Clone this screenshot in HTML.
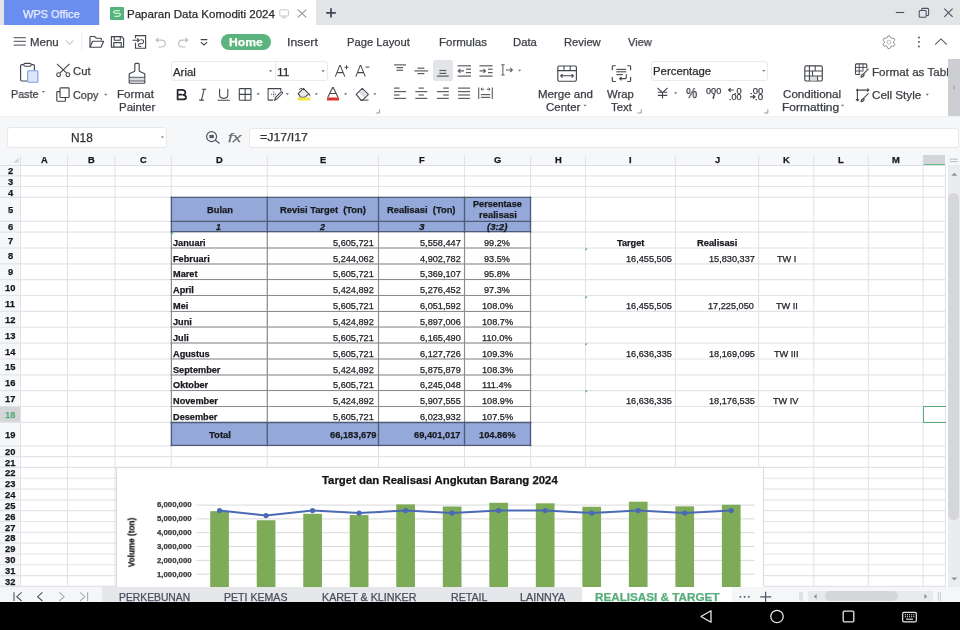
<!DOCTYPE html><html><head><meta charset="utf-8"><style>
*{margin:0;padding:0;box-sizing:border-box}
html,body{width:960px;height:630px;overflow:hidden;background:#fff;font-family:"Liberation Sans",sans-serif;color:#333}
.ab{position:absolute}
.t{position:absolute;white-space:pre;line-height:1;transform-origin:0 0;will-change:transform;-webkit-text-stroke:0.25px currentColor}
svg.ov{position:absolute;left:0;top:0;overflow:visible}
</style></head><body>

<div class="ab" style="left:0px;top:0px;width:960px;height:25px;background:#e3e4e6"></div>
<div class="ab" style="left:4px;top:0px;width:95px;height:25px;background:#6a8df0"></div>
<div class="ab" style="left:100px;top:0px;width:216px;height:25px;background:#ffffff"></div>
<div class="ab" style="left:110.2px;top:7.1px;width:13.6px;height:13.2px;background:#55b47b;border-radius:1px"></div>
<div class="t" style="left:23.1px;top:9px;font-size:11.26px;color:#eef2fe;transform:scaleX(0.978)">WPS Office</div>
<div class="t" style="left:126.83px;top:9px;font-size:11.26px;color:#2a2c31;transform:scaleX(1.024)">Paparan Data Komoditi 2024</div>
<svg class="ov" width="960" height="630" viewBox="0 0 960 630">
<path d="M119.9 10.7H115.6Q114 10.7 113.6 11.9Q113.4 13.3 115.2 13.3H118.6Q120.4 13.3 120.3 14.8Q120.1 16.3 118.4 16.3H114.2" fill="none" stroke="#e8fff0" stroke-width="1.05"/>
<rect x="279.8" y="9.8" width="8.6" height="6.2" rx="1" fill="none" stroke="#c3c6cc" stroke-width="1"/>
<path d="M284.1 16v1.6M282 17.8h4.2" stroke="#c3c6cc" stroke-width="1"/>
<path d="M297.8 9.6L306.3 17.3M306.3 9.6L297.8 17.3" stroke="#8d919a" stroke-width="1.05"/>
<path d="M331 8.3v9.2M326.2 12.9h9.6" stroke="#3c4456" stroke-width="1.7"/>
<path d="M895.8 12.5h8.4" stroke="#4b5060" stroke-width="1.1"/>
<rect x="919.2" y="10.5" width="7" height="6.8" rx="1" fill="none" stroke="#4b5060" stroke-width="1.05"/>
<path d="M921.7 10.4V9.4Q921.7 8.4 922.7 8.4H927.6Q928.6 8.4 928.6 9.4V14.4Q928.6 15.4 927.6 15.4H926.3" fill="none" stroke="#4b5060" stroke-width="1.05"/>
<path d="M944.3 8.6L952.6 16.9M952.6 8.6L944.3 16.9" stroke="#4b5060" stroke-width="1.05"/>
</svg>
<div class="t" style="left:30.38px;top:37px;font-size:10.9px;color:#3b3e45;transform:scaleX(1.052)">Menu</div>
<div class="ab" style="left:220.8px;top:33.5px;width:50.4px;height:16.7px;background:#5bb37d;border-radius:9px"></div>
<div class="t" style="left:228.91px;top:37px;font-size:11.19px;color:#ffffff;transform:scaleX(1.084);font-weight:bold">Home</div>
<div class="t" style="left:287.19px;top:37px;font-size:11.19px;color:#3b3e45;transform:scaleX(1.101)">Insert</div>
<div class="t" style="left:346.6px;top:37px;font-size:11.19px;color:#3b3e45">Page Layout</div>
<div class="t" style="left:439.08px;top:37px;font-size:11.19px;color:#3b3e45;transform:scaleX(1.029)">Formulas</div>
<div class="t" style="left:513.3px;top:37px;font-size:11.19px;color:#3b3e45;transform:scaleX(1.010)">Data</div>
<div class="t" style="left:563.81px;top:37px;font-size:11.19px;color:#3b3e45">Review</div>
<div class="t" style="left:628.3px;top:37px;font-size:11.19px;color:#3b3e45;transform:scaleX(0.985)">View</div>
<svg class="ov" width="960" height="630" viewBox="0 0 960 630">
<path d="M13.7 37.7h12.1M13.7 41.4h12.1M13.7 45.1h12.1" stroke="#6a6d73" stroke-width="1.2"/>
<path d="M66 40.4l3.6 4 3.6-4" fill="none" stroke="#acafb4" stroke-width="1"/>
<path d="M81.7 32v19.3" stroke="#ececee" stroke-width="1"/>
<path d="M90 47.2V37.2Q90 36.5 90.7 36.5H94.6L96.2 38.2H100.6Q101.3 38.2 101.3 38.9V40.6" fill="none" stroke="#42464e" stroke-width="1.15"/>
<path d="M90 47.2L92.6 41.2H103.6L101 47.2Z" fill="none" stroke="#42464e" stroke-width="1.15" stroke-linejoin="round"/>
<path d="M111.4 36.6H121.6L123.6 38.6V47.1H111.4Z" fill="none" stroke="#42464e" stroke-width="1.15"/>
<path d="M114.3 36.6V40.2H120.3V36.6M113.8 47.1V42.6H121.2V47.1" fill="none" stroke="#42464e" stroke-width="1.1"/>
<path d="M135.5 38.2V35.6H145.6V48.2H135.5V42.8" fill="none" stroke="#42464e" stroke-width="1.15"/>
<path d="M132.5 40.3H139M137.2 38.4L139.2 40.3L137.2 42.2" fill="none" stroke="#42464e" stroke-width="1.1"/>
<path d="M140.3 39.8Q143.8 39.2 143.6 41.7Q143.3 44 140.6 43.6Q138 43.6 138.4 45.6Q139 47 141.3 46.4" fill="none" stroke="#42464e" stroke-width="1.05"/>
<path d="M156.3 40.1H161.4Q165.3 40.1 165.3 43.6Q165.3 47 161.4 47H158.2M158.4 37.8L156.1 40.1L158.4 42.4" fill="none" stroke="#bbbec3" stroke-width="1.1"/>
<path d="M187.6 40.1H182.5Q178.6 40.1 178.6 43.6Q178.6 47 182.5 47H185.7M185.5 37.8L187.8 40.1L185.5 42.4" fill="none" stroke="#bbbec3" stroke-width="1.1"/>
<path d="M200.6 39.6H207.3M200.8 42.2L204 45L207.2 42.2" fill="none" stroke="#42464e" stroke-width="1.1"/>
<path d="M888.90 35.90L889.23 35.91L889.56 35.93L889.89 35.98L890.14 36.36L890.34 36.84L890.49 37.32L890.62 37.72L890.85 37.81L891.08 37.92L891.30 38.04L891.51 38.17L891.72 38.32L891.92 38.47L892.33 38.39L892.82 38.28L893.33 38.21L893.80 38.24L894.00 38.50L894.18 38.77L894.36 39.05L894.51 39.34L894.66 39.64L894.78 39.94L894.58 40.36L894.26 40.76L893.92 41.13L893.64 41.45L893.67 41.70L893.69 41.95L893.70 42.20L893.69 42.45L893.67 42.70L893.64 42.95L893.92 43.27L894.26 43.64L894.58 44.04L894.78 44.46L894.66 44.76L894.51 45.06L894.36 45.35L894.18 45.63L894.00 45.90L893.80 46.16L893.33 46.19L892.82 46.12L892.33 46.01L891.92 45.93L891.72 46.08L891.51 46.23L891.30 46.36L891.08 46.48L890.85 46.59L890.62 46.68L890.49 47.08L890.34 47.56L890.14 48.04L889.89 48.42L889.56 48.47L889.23 48.49L888.90 48.50L888.57 48.49L888.24 48.47L887.91 48.42L887.66 48.04L887.46 47.56L887.31 47.08L887.18 46.68L886.95 46.59L886.72 46.48L886.50 46.36L886.29 46.23L886.08 46.08L885.88 45.93L885.47 46.01L884.98 46.12L884.47 46.19L884.00 46.16L883.80 45.90L883.62 45.63L883.44 45.35L883.29 45.06L883.14 44.76L883.02 44.46L883.22 44.04L883.54 43.64L883.88 43.27L884.16 42.95L884.13 42.70L884.11 42.45L884.10 42.20L884.11 41.95L884.13 41.70L884.16 41.45L883.88 41.13L883.54 40.76L883.22 40.36L883.02 39.94L883.14 39.64L883.29 39.34L883.44 39.05L883.62 38.77L883.80 38.50L884.00 38.24L884.47 38.21L884.98 38.28L885.47 38.39L885.88 38.47L886.08 38.32L886.29 38.17L886.50 38.04L886.72 37.92L886.95 37.81L887.18 37.72L887.31 37.32L887.46 36.84L887.66 36.36L887.91 35.98L888.24 35.93L888.57 35.91Z" fill="none" stroke="#74777e" stroke-width="1" stroke-linejoin="round"/>
<circle cx="888.9" cy="42.2" r="2" fill="none" stroke="#b0b2b7" stroke-width="0.9"/>
<circle cx="918.9" cy="37.5" r="0.95" fill="#555"/><circle cx="918.9" cy="41.9" r="0.95" fill="#555"/><circle cx="918.9" cy="46.5" r="0.95" fill="#555"/>
<path d="M935.2 44.6L941 38.9L946.8 44.6" fill="none" stroke="#555" stroke-width="1.1"/>
</svg>
<div class="t" style="left:11.04px;top:89px;font-size:11.26px;color:#3b3e45;transform:scaleX(0.955)">Paste</div>
<div class="t" style="left:73.44px;top:67px;font-size:10.39px;color:#3b3e45;transform:scaleX(1.087)">Cut</div>
<div class="t" style="left:73.46px;top:90px;font-size:10.9px;color:#3b3e45;transform:scaleX(0.994)">Copy</div>
<div class="t" style="left:116.57px;top:89px;font-size:10.54px;color:#3b3e45;transform:scaleX(1.107)">Format</div>
<div class="t" style="left:118.83px;top:103px;font-size:10.39px;color:#3b3e45;transform:scaleX(1.103)">Painter</div>
<div class="t" style="left:537.83px;top:90px;font-size:10.39px;color:#3b3e45;transform:scaleX(1.109)">Merge and</div>
<div class="t" style="left:545.68px;top:102px;font-size:10.54px;color:#3b3e45;transform:scaleX(1.089)">Center</div>
<div class="t" style="left:606.9px;top:89px;font-size:10.54px;color:#3b3e45;transform:scaleX(1.067)">Wrap</div>
<div class="t" style="left:611.02px;top:103px;font-size:10.03px;color:#3b3e45;transform:scaleX(1.138)">Text</div>
<div class="t" style="left:783.17px;top:90px;font-size:10.39px;color:#3b3e45;transform:scaleX(1.119)">Conditional</div>
<div class="t" style="left:781.54px;top:103px;font-size:10.17px;color:#3b3e45;transform:scaleX(1.178)">Formatting</div>
<div class="t" style="left:872.17px;top:90px;font-size:10.9px;color:#3b3e45;transform:scaleX(1.070)">Cell Style</div>
<div class="ab" style="left:171.25px;top:60.5px;width:156.25px;height:20.6px;background:#fff;border:1px solid #e9eaed;border-radius:3px"></div>
<div class="ab" style="left:275px;top:61px;width:1px;height:19.6px;background:#e9eaed"></div>
<div class="ab" style="left:651.25px;top:60.5px;width:116.85px;height:20.25px;background:#fff;border:1px solid #e9eaed;border-radius:3px"></div>
<div class="t" style="left:173.1px;top:67px;font-size:10.68px;color:#2b2d33;transform:scaleX(1.069)">Arial</div>
<div class="t" style="left:276.6px;top:67px;font-size:10.9px;color:#2b2d33;transform:scaleX(1.103)">11</div>
<div class="t" style="left:652.84px;top:66px;font-size:10.9px;color:#2b2d33;transform:scaleX(1.044)">Percentage</div>
<div class="ab" style="left:860px;top:58px;width:87.5px;height:25px;overflow:hidden">
<div class="t" style="left:11.82px;top:9px;font-size:10.9px;color:#3b3e45;transform:scaleX(1.070)">Format as Table</div>
</div>
<div class="ab" style="left:432.5px;top:60.25px;width:20.25px;height:20.5px;background:#e2e4e8;border-radius:2.5px"></div>
<div class="ab" style="left:948.1px;top:59px;width:11.9px;height:56.75px;background:#cdced3"></div>
<div class="ab" style="left:0px;top:116.3px;width:960px;height:1px;background:#f0f1f3"></div>
<svg class="ov" width="960" height="630" viewBox="0 0 960 630">
<path d="M41.80 90.95H45.00L43.40 92.85Z" fill="#6b6e74"/>
<path d="M104.20 93.75H107.40L105.80 95.65Z" fill="#6b6e74"/>
<path d="M269.00 70.25H272.20L270.60 72.15Z" fill="#6b6e74"/>
<path d="M321.50 70.25H324.70L323.10 72.15Z" fill="#6b6e74"/>
<path d="M762.20 69.95H765.40L763.80 71.85Z" fill="#6b6e74"/>
<path d="M256.50 93.25H259.70L258.10 95.15Z" fill="#6b6e74"/>
<path d="M285.70 93.25H288.90L287.30 95.15Z" fill="#6b6e74"/>
<path d="M314.70 93.25H317.90L316.30 95.15Z" fill="#6b6e74"/>
<path d="M344.00 93.25H347.20L345.60 95.15Z" fill="#6b6e74"/>
<path d="M373.20 93.25H376.40L374.80 95.15Z" fill="#6b6e74"/>
<path d="M518.00 69.65H521.20L519.60 71.55Z" fill="#6b6e74"/>
<path d="M583.40 104.65H586.60L585.00 106.55Z" fill="#6b6e74"/>
<path d="M674.00 92.25H677.20L675.60 94.15Z" fill="#6b6e74"/>
<path d="M840.90 104.65H844.10L842.50 106.55Z" fill="#6b6e74"/>
<path d="M925.70 93.75H928.90L927.30 95.65Z" fill="#6b6e74"/>
<path d="M379.6 109.4V113.0H375.8" fill="none" stroke="#8a8d93" stroke-width="0.9"/>
<path d="M641.2 109.4V113.0H637.4" fill="none" stroke="#8a8d93" stroke-width="0.9"/>
<path d="M767.8 109.4V113.0H764.0" fill="none" stroke="#8a8d93" stroke-width="0.9"/>
<path d="M27 81H21.8Q20.6 81 20.6 79.8V65.8Q20.6 64.6 21.8 64.6H23.6M31.4 64.6H33.2Q34.4 64.6 34.4 65.8V70.2" fill="none" stroke="#42464e" stroke-width="1.15"/>
<rect x="23.8" y="63.4" width="7.4" height="2.9" rx="1.2" fill="#fff" stroke="#42464e" stroke-width="1.1"/>
<rect x="27.7" y="70.8" width="10.2" height="11.4" rx="1" fill="#dde6f8" stroke="#7f9ce0" stroke-width="1.1"/>
<path d="M57 63.8L66.4 72.8M69.5 63.8L60.1 72.8" fill="none" stroke="#42464e" stroke-width="1.1"/>
<circle cx="58.6" cy="74.7" r="1.9" fill="none" stroke="#42464e" stroke-width="1.1"/><circle cx="67.9" cy="74.7" r="1.9" fill="none" stroke="#42464e" stroke-width="1.1"/>
<rect x="60" y="87.9" width="9.1" height="9.6" rx="0.8" fill="none" stroke="#42464e" stroke-width="1.15"/>
<path d="M60 91.6H57.6Q56.8 91.6 56.8 92.4V100.4Q56.8 101.2 57.6 101.2H64.6Q65.4 101.2 65.4 100.4V97.5" fill="none" stroke="#42464e" stroke-width="1.15"/>
<path d="M134.8 70.8V64.4Q134.8 63.4 135.8 63.4H138.2Q139.2 63.4 139.2 64.4V70.8Q139.2 71.3 139.7 71.5L144.3 73.6Q144.8 73.9 144.8 74.5V82.6Q144.8 83.2 144.2 83.2H129.8Q129.2 83.2 129.2 82.6V74.5Q129.2 73.9 129.7 73.6L134.3 71.5Q134.8 71.3 134.8 70.8Z" fill="none" stroke="#42464e" stroke-width="1.15"/>
<rect x="129.8" y="77.6" width="14.4" height="3.3" fill="#dcdde0"/>
<path d="M129.2 77.3H144.8M129.2 81H144.8" stroke="#42464e" stroke-width="0.9"/>
<path d="M335.3 76.6L339.8 65.4H340.3L344.8 76.6M337 72.6H343.1" fill="none" stroke="#42464e" stroke-width="1.05"/>
<path d="M344.6 67.3H348.4M346.5 65.3V69.3" stroke="#42464e" stroke-width="1"/>
<path d="M355.8 76.6L360.3 65.4H360.8L365.3 76.6M357.5 72.6H363.6" fill="none" stroke="#42464e" stroke-width="1.05"/>
<path d="M365.6 67.1H369.4" stroke="#42464e" stroke-width="1"/>
<path d="M177.6 89.9H181.9Q185.4 89.9 185.4 92.6Q185.4 94.4 183.4 94.8Q186.1 95.3 186.1 97.4Q186.1 99.4 182.6 99.4H177.6Z M177.6 94.6H182.4" fill="none" stroke="#23262d" stroke-width="1.7" stroke-linejoin="round"/>
<path d="M201.8 89.3H206.4M199.2 100.1H203.8M204.1 89.3L201.5 100.1" fill="none" stroke="#42464e" stroke-width="1.05"/>
<path d="M219.6 88.8V95.1Q219.6 98.4 223.7 98.4Q227.8 98.4 227.8 95.1V88.8M217.6 100.3H229.9" fill="none" stroke="#42464e" stroke-width="1.1"/>
<rect x="239.3" y="88.6" width="11.7" height="11.6" rx="0.6" fill="none" stroke="#42464e" stroke-width="1.1"/><path d="M245.15 88.6V100.2M239.3 94.4H251" stroke="#42464e" stroke-width="1.1"/>
<path d="M268.1 100.1V88.6H280.8V91.2M268.1 100.1H273.1" fill="none" stroke="#42464e" stroke-width="1.05"/>
<path d="M271 94.4H276.6M273.8 91.6V97.2" stroke="#42464e" stroke-width="0.9" stroke-dasharray="1 1"/>
<path d="M274.6 100.1L275.4 97.6L280.9 92.1Q281.6 91.4 282.3 92.1Q283 92.8 282.3 93.5L276.8 99Z" fill="none" stroke="#42464e" stroke-width="1.05"/>
<path d="M298.2 93.6L303.4 88.4L308.8 93.8L304.8 97.2H300.6Z" fill="#e8e9eb" stroke="#42464e" stroke-width="1.1" stroke-linejoin="round"/>
<path d="M302 88.6Q300 87.6 299.4 89.8M309 93.8L310.3 96.2" fill="none" stroke="#42464e" stroke-width="1"/>
<rect x="297.6" y="97.5" width="12.6" height="3" fill="#efe54a"/>
<path d="M327.8 97.2L332.6 87.6H333.2L338 97.2M329.7 93.5H336.2" fill="none" stroke="#42464e" stroke-width="1.1"/>
<rect x="327" y="97.5" width="12" height="3" fill="#d83430"/>
<path d="M356.2 94.4L362.3 88.4L368.4 94.4L362.6 100.1H360.9Z" fill="none" stroke="#42464e" stroke-width="1.1" stroke-linejoin="round"/>
<path d="M362.3 89.8L367 94.4L363.9 97.5L359.2 92.9Z" fill="#dcdde0"/>
<path d="M360.6 100.1H368.5" stroke="#42464e" stroke-width="1"/>
<path d="M394 64.9H406" stroke="#5a5d63" stroke-width="1.2"/>
<path d="M396.5 67.6H403.1" stroke="#5a5d63" stroke-width="1.2"/>
<path d="M396.5 70.3H403.1" stroke="#5a5d63" stroke-width="1.2"/>
<path d="M417.5 68.2H424.4" stroke="#5a5d63" stroke-width="1.2"/>
<path d="M414.4 70.9H428.1" stroke="#5a5d63" stroke-width="1.2"/>
<path d="M417.5 73.6H424.4" stroke="#5a5d63" stroke-width="1.2"/>
<path d="M439.4 70.5H446.3" stroke="#5a5d63" stroke-width="1.2"/>
<path d="M439.4 73.4H446.3" stroke="#5a5d63" stroke-width="1.2"/>
<path d="M436.9 76.1H448.8" stroke="#5a5d63" stroke-width="1.2"/>
<path d="M457.6 65.8H471" stroke="#5a5d63" stroke-width="1.2"/>
<path d="M466 69.2H471" stroke="#5a5d63" stroke-width="1.2"/>
<path d="M466 72.6H471" stroke="#5a5d63" stroke-width="1.2"/>
<path d="M457.6 76.1H471" stroke="#5a5d63" stroke-width="1.2"/>
<path d="M458 70.9H464M460.4 68.9L458.2 70.9L460.4 72.9" fill="none" stroke="#5a5d63" stroke-width="1.1"/>
<path d="M479.4 65.8H492.6" stroke="#5a5d63" stroke-width="1.2"/>
<path d="M488 69.2H492.6" stroke="#5a5d63" stroke-width="1.2"/>
<path d="M488 72.6H492.6" stroke="#5a5d63" stroke-width="1.2"/>
<path d="M479.4 76.1H492.6" stroke="#5a5d63" stroke-width="1.2"/>
<path d="M479.6 70.9H485.6M483.4 68.9L485.6 70.9L483.4 72.9" fill="none" stroke="#5a5d63" stroke-width="1.1"/>
<path d="M501.2 64.7H504.6M501.2 75H504.6M502.9 64.7V75M506 69.9H512.3M510.2 67.8L512.4 69.9L510.2 72" fill="none" stroke="#5a5d63" stroke-width="1.05"/>
<path d="M394 88.1H399.6" stroke="#5a5d63" stroke-width="1.2"/>
<path d="M394 91.6H406" stroke="#5a5d63" stroke-width="1.2"/>
<path d="M394 95H399.6" stroke="#5a5d63" stroke-width="1.2"/>
<path d="M394 98.4H406" stroke="#5a5d63" stroke-width="1.2"/>
<path d="M418.6 88.1H423.9" stroke="#5a5d63" stroke-width="1.2"/>
<path d="M415.3 91.6H427.3" stroke="#5a5d63" stroke-width="1.2"/>
<path d="M418.6 95H423.9" stroke="#5a5d63" stroke-width="1.2"/>
<path d="M415.3 98.4H427.3" stroke="#5a5d63" stroke-width="1.2"/>
<path d="M443.2 88.1H448.8" stroke="#5a5d63" stroke-width="1.2"/>
<path d="M436.9 91.6H448.8" stroke="#5a5d63" stroke-width="1.2"/>
<path d="M443.2 95H448.8" stroke="#5a5d63" stroke-width="1.2"/>
<path d="M436.9 98.4H448.8" stroke="#5a5d63" stroke-width="1.2"/>
<path d="M458.1 88.1H470" stroke="#5a5d63" stroke-width="1.2"/>
<path d="M458.1 91.6H470" stroke="#5a5d63" stroke-width="1.2"/>
<path d="M458.1 95H470" stroke="#5a5d63" stroke-width="1.2"/>
<path d="M458.1 98.4H470" stroke="#5a5d63" stroke-width="1.2"/>
<path d="M478.7 87.6V99M492.3 87.6V99" stroke="#5a5d63" stroke-width="1.1"/>
<path d="M481 89.2H484.2M482.4 87.8L480.9 89.2L482.4 90.6M490 89.2H486.8M488.6 87.8L490.1 89.2L488.6 90.6" fill="none" stroke="#5a5d63" stroke-width="1"/>
<path d="M480.8 94.6H490.2" stroke="#5a5d63" stroke-width="1.2"/>
<path d="M480.8 97.4H490.2" stroke="#5a5d63" stroke-width="1.2"/>
<rect x="557.8" y="66" width="18.6" height="15.2" rx="1.4" fill="none" stroke="#42464e" stroke-width="1.15"/>
<path d="M557.8 70.6H576.4M564 66V70.6M570.2 66V70.6" stroke="#42464e" stroke-width="1.05"/>
<path d="M560.8 75.8H573.4M562.6 74.1L560.7 75.8L562.6 77.5M571.6 74.1L573.5 75.8L571.6 77.5" fill="none" stroke="#42464e" stroke-width="1.05"/>
<path d="M612.3 70.2V66.5Q612.3 65.7 613.1 65.7H615.8M627.2 65.7H629.8Q630.6 65.7 630.6 66.5V70.2M612.3 77.1V80.7Q612.3 81.5 613.1 81.5H615.8M627.2 81.5H629.8Q630.6 81.5 630.6 80.7V77.1" fill="none" stroke="#42464e" stroke-width="1.15"/>
<path d="M616.4 69.4H626.2" stroke="#42464e" stroke-width="1.1"/>
<path d="M616.4 71.8H626.2" stroke="#42464e" stroke-width="1.1"/>
<path d="M616.4 74.6H623" stroke="#42464e" stroke-width="1.1"/>
<path d="M626.3 74.2V77.6Q626.3 78.6 625.3 78.6H619.8M621.6 76.8L619.6 78.6L621.6 80.4" fill="none" stroke="#42464e" stroke-width="1.1"/>
<path d="M657.4 87.8L662.5 92.6L667.6 87.8M662.5 92.6V98.4M657.8 92.2H667.2M657.8 95.4H667.2" fill="none" stroke="#42464e" stroke-width="1.15"/>
</svg>
<div class="t" style="left:686.46px;top:87px;font-size:13.88px;color:#3b3e45;transform:scaleX(0.909)">%</div>
<div class="t" style="left:705.88px;top:87px;font-size:8.86px;color:#3b3e45;transform:scaleX(1.033)">000</div>
<div class="t" style="left:733.76px;top:87px;font-size:8.86px;color:#3b3e45;transform:scaleX(1.050)">.0</div>
<div class="t" style="left:728.99px;top:93px;font-size:8.86px;color:#3b3e45;transform:scaleX(1.017)">.00</div>
<div class="t" style="left:749.95px;top:87px;font-size:8.86px;color:#3b3e45;transform:scaleX(1.071)">.00</div>
<div class="t" style="left:754.91px;top:93px;font-size:8.86px;color:#3b3e45;transform:scaleX(1.113)">.0</div>
<svg class="ov" width="960" height="630" viewBox="0 0 960 630">
<path d="M714.3 94.3L713.2 98.3" stroke="#3b3e45" stroke-width="1.4" stroke-linecap="round"/>
<path d="M728.6 90H733.8M730.6 88.2L728.6 90L730.6 91.8" fill="none" stroke="#42464e" stroke-width="1.2"/>
<path d="M750 96.8H755M753 95L755 96.8L753 98.6" fill="none" stroke="#42464e" stroke-width="1.2"/>
<rect x="804.8" y="65.8" width="17.5" height="15.2" rx="1.6" fill="none" stroke="#42464e" stroke-width="1.15"/>
<rect x="809.9" y="76.5" width="7.2" height="4" fill="#dcdde0"/>
<path d="M804.8 70.9H822.3M804.8 76H822.3M809.4 65.8V81M815.2 65.8V70.9M812.5 70.9V76M817.6 76V81" stroke="#42464e" stroke-width="1.05"/>
<path d="M866.8 68.6V64.9Q866.8 63.9 865.8 63.9H856.5Q855.5 63.9 855.5 64.9V73.5Q855.5 74.5 856.5 74.5H860.2" fill="none" stroke="#42464e" stroke-width="1.1"/>
<path d="M855.5 67.4H866.6M855.5 71H862.5M859.2 63.9V74.5M863 63.9V71.5" stroke="#42464e" stroke-width="0.95"/>
<path d="M868.2 69.2L863.3 74.2M863.6 73.9Q861.2 74.6 861 77.3Q863.6 77.2 864.3 74.7" fill="none" stroke="#42464e" stroke-width="1.1" stroke-linecap="round"/>
<path d="M857.4 88.7V100.6M855.9 99.1L857.4 100.6L858.9 99.1M856 90.1H868.8M867.3 88.6L868.8 90.1L867.3 91.6" fill="none" stroke="#42464e" stroke-width="1.1"/>
<path d="M868.2 93.7L863.3 98.7M863.6 98.4Q861.2 99.1 861 101.8Q863.6 101.7 864.3 99.2" fill="none" stroke="#42464e" stroke-width="1.1" stroke-linecap="round"/>
<path d="M953 85.6L955 87.5L953 89.4" fill="none" stroke="#8c8e93" stroke-width="0.9"/>
</svg>
<div class="ab" style="left:0px;top:117.3px;width:960px;height:48px;background:#f6f7f9"></div>
<div class="ab" style="left:7px;top:127.25px;width:160px;height:20.55px;background:#fff;border:1px solid #e8e9ec;border-radius:3px"></div>
<div class="ab" style="left:249.4px;top:127.5px;width:710.1px;height:20.3px;background:#fff;border:1px solid #e8e9ec;border-radius:3px"></div>
<div class="t" style="left:70.95px;top:133px;font-size:11.85px;color:#2f3136">N18</div>
<div class="t" style="left:260.04px;top:132px;font-size:11.48px;color:#2f3136;transform:scaleX(1.082)">=J17/I17</div>
<div class="t" style="left:228.33px;top:131px;font-size:13.33px;color:#6a6e7a;transform:scaleX(1.278);font-style:italic;font-family:"Liberation Serif",serif">fx</div>
<svg class="ov" width="960" height="630" viewBox="0 0 960 630">
<path d="M160.80 136.40H163.80L162.30 138.20Z" fill="#777"/>
<circle cx="211.6" cy="136.6" r="5" fill="none" stroke="#525766" stroke-width="1.2"/>
<rect x="209.4" y="134.9" width="4.4" height="3.2" fill="#525766"/>
<path d="M215.3 140.3L219.6 143.6" stroke="#525766" stroke-width="1.2"/>
</svg>
<div class="ab" style="left:20px;top:165.3px;width:925.4px;height:422px;background:#ffffff"></div>
<div class="ab" style="left:0px;top:154px;width:20px;height:433.3px;background:#f6f7f9"></div>
<div class="ab" style="left:20px;top:154px;width:925.4px;height:11.3px;background:#f6f7f9"></div>
<div class="ab" style="left:923.1px;top:154.7px;width:22.3px;height:9.7px;background:#d4d5d9"></div>
<div class="ab" style="left:923.1px;top:163.5px;width:22.3px;height:1.8px;background:#6cbb8b"></div>
<div class="ab" style="left:0px;top:406.54px;width:20px;height:15.86px;background:#d4d5d9"></div>
<div class="ab" style="left:20px;top:406.54px;width:1px;height:15.86px;background:#6cc08e"></div>
<svg class="ov" width="960" height="630" viewBox="0 0 960 630">
<path d="M0 175.90H945.4" stroke="#e3e4ea" stroke-width="1.15"/>
<path d="M0 186.50H945.4" stroke="#e3e4ea" stroke-width="1.15"/>
<path d="M0 197.30H945.4" stroke="#e3e4ea" stroke-width="1.15"/>
<path d="M0 221.40H945.4" stroke="#e3e4ea" stroke-width="1.15"/>
<path d="M0 232.10H945.4" stroke="#e3e4ea" stroke-width="1.15"/>
<path d="M0 247.96H945.4" stroke="#e3e4ea" stroke-width="1.15"/>
<path d="M0 263.82H945.4" stroke="#e3e4ea" stroke-width="1.15"/>
<path d="M0 279.68H945.4" stroke="#e3e4ea" stroke-width="1.15"/>
<path d="M0 295.53H945.4" stroke="#e3e4ea" stroke-width="1.15"/>
<path d="M0 311.39H945.4" stroke="#e3e4ea" stroke-width="1.15"/>
<path d="M0 327.25H945.4" stroke="#e3e4ea" stroke-width="1.15"/>
<path d="M0 343.11H945.4" stroke="#e3e4ea" stroke-width="1.15"/>
<path d="M0 358.97H945.4" stroke="#e3e4ea" stroke-width="1.15"/>
<path d="M0 374.82H945.4" stroke="#e3e4ea" stroke-width="1.15"/>
<path d="M0 390.68H945.4" stroke="#e3e4ea" stroke-width="1.15"/>
<path d="M0 406.54H945.4" stroke="#e3e4ea" stroke-width="1.15"/>
<path d="M0 422.40H945.4" stroke="#e3e4ea" stroke-width="1.15"/>
<path d="M0 445.80H945.4" stroke="#e3e4ea" stroke-width="1.15"/>
<path d="M0 456.62H945.4" stroke="#e3e4ea" stroke-width="1.15"/>
<path d="M0 467.43H945.4" stroke="#e3e4ea" stroke-width="1.15"/>
<path d="M0 478.25H945.4" stroke="#e3e4ea" stroke-width="1.15"/>
<path d="M0 489.06H945.4" stroke="#e3e4ea" stroke-width="1.15"/>
<path d="M0 499.88H945.4" stroke="#e3e4ea" stroke-width="1.15"/>
<path d="M0 510.69H945.4" stroke="#e3e4ea" stroke-width="1.15"/>
<path d="M0 521.51H945.4" stroke="#e3e4ea" stroke-width="1.15"/>
<path d="M0 532.32H945.4" stroke="#e3e4ea" stroke-width="1.15"/>
<path d="M0 543.14H945.4" stroke="#e3e4ea" stroke-width="1.15"/>
<path d="M0 553.95H945.4" stroke="#e3e4ea" stroke-width="1.15"/>
<path d="M0 564.77H945.4" stroke="#e3e4ea" stroke-width="1.15"/>
<path d="M0 575.58H945.4" stroke="#e3e4ea" stroke-width="1.15"/>
<path d="M0 586.40H945.4" stroke="#e3e4ea" stroke-width="1.15"/>
<path d="M0 165.5H945.4" stroke="#dcdee5" stroke-width="1"/>
<path d="M20.5 155.8V587.3" stroke="#e0e1e9" stroke-width="1.0"/>
<path d="M67.5 155.8V587.3" stroke="#e0e1e9" stroke-width="1.0"/>
<path d="M115 155.8V587.3" stroke="#e0e1e9" stroke-width="1.0"/>
<path d="M171.25 155.8V587.3" stroke="#e0e1e9" stroke-width="1.0"/>
<path d="M267.25 155.8V587.3" stroke="#e0e1e9" stroke-width="1.0"/>
<path d="M378.5 155.8V587.3" stroke="#e0e1e9" stroke-width="1.0"/>
<path d="M464.5 155.8V587.3" stroke="#e0e1e9" stroke-width="1.0"/>
<path d="M530.6 155.8V587.3" stroke="#e0e1e9" stroke-width="1.0"/>
<path d="M585.5 155.8V587.3" stroke="#e0e1e9" stroke-width="1.0"/>
<path d="M675.4 155.8V587.3" stroke="#e0e1e9" stroke-width="1.0"/>
<path d="M758.6 155.8V587.3" stroke="#e0e1e9" stroke-width="1.0"/>
<path d="M813.75 155.8V587.3" stroke="#e0e1e9" stroke-width="1.0"/>
<path d="M868.3 155.8V587.3" stroke="#e0e1e9" stroke-width="1.0"/>
<path d="M923.1 155.8V587.3" stroke="#e0e1e9" stroke-width="1.0"/>
<path d="M945.4 155.8V587.3" stroke="#e0e1e9" stroke-width="1.0"/>
<path d="M18.6 157.9V162.6H13.2Z" fill="#cfd1d6"/>
</svg>
<div class="t" style="left:40.62px;top:156px;font-size:9.16px;color:#15171c;transform:scaleX(1.019);font-weight:bold">A</div>
<div class="t" style="left:87.77px;top:156px;font-size:9.16px;color:#15171c;transform:scaleX(1.019);font-weight:bold">B</div>
<div class="t" style="left:139.69px;top:156px;font-size:9.16px;color:#15171c;transform:scaleX(1.019);font-weight:bold">C</div>
<div class="t" style="left:215.75px;top:156px;font-size:9.16px;color:#15171c;transform:scaleX(1.019);font-weight:bold">D</div>
<div class="t" style="left:319.63px;top:156px;font-size:9.16px;color:#15171c;transform:scaleX(1.019);font-weight:bold">E</div>
<div class="t" style="left:418.51px;top:156px;font-size:9.16px;color:#15171c;transform:scaleX(1.019);font-weight:bold">F</div>
<div class="t" style="left:494px;top:156px;font-size:9.16px;color:#15171c;transform:scaleX(1.019);font-weight:bold">G</div>
<div class="t" style="left:554.69px;top:156px;font-size:9.16px;color:#15171c;transform:scaleX(1.019);font-weight:bold">H</div>
<div class="t" style="left:629.14px;top:156px;font-size:9.16px;color:#15171c;transform:scaleX(1.019);font-weight:bold">I</div>
<div class="t" style="left:714.64px;top:156px;font-size:9.16px;color:#15171c;transform:scaleX(1.019);font-weight:bold">J</div>
<div class="t" style="left:782.53px;top:156px;font-size:9.16px;color:#15171c;transform:scaleX(1.019);font-weight:bold">K</div>
<div class="t" style="left:837.99px;top:156px;font-size:9.16px;color:#15171c;transform:scaleX(1.019);font-weight:bold">L</div>
<div class="t" style="left:891.8px;top:156px;font-size:9.16px;color:#15171c;transform:scaleX(1.019);font-weight:bold">M</div>
<div class="t" style="left:7.63px;top:167px;font-size:9.16px;color:#15171c;transform:scaleX(1.019);font-weight:bold">2</div>
<div class="t" style="left:7.68px;top:178px;font-size:9.16px;color:#15171c;transform:scaleX(1.019);font-weight:bold">3</div>
<div class="t" style="left:7.54px;top:189px;font-size:9.16px;color:#15171c;transform:scaleX(1.019);font-weight:bold">4</div>
<div class="t" style="left:7.59px;top:206px;font-size:9.16px;color:#15171c;transform:scaleX(1.019);font-weight:bold">5</div>
<div class="t" style="left:7.61px;top:223px;font-size:9.16px;color:#15171c;transform:scaleX(1.019);font-weight:bold">6</div>
<div class="t" style="left:7.61px;top:237px;font-size:9.16px;color:#15171c;transform:scaleX(1.019);font-weight:bold">7</div>
<div class="t" style="left:7.59px;top:252px;font-size:9.16px;color:#15171c;transform:scaleX(1.019);font-weight:bold">8</div>
<div class="t" style="left:7.63px;top:268px;font-size:9.16px;color:#15171c;transform:scaleX(1.019);font-weight:bold">9</div>
<div class="t" style="left:4.9px;top:284px;font-size:9.16px;color:#15171c;transform:scaleX(1.019);font-weight:bold">10</div>
<div class="t" style="left:5.11px;top:300px;font-size:9.16px;color:#15171c;transform:scaleX(1.019);font-weight:bold">11</div>
<div class="t" style="left:4.9px;top:316px;font-size:9.16px;color:#15171c;transform:scaleX(1.019);font-weight:bold">12</div>
<div class="t" style="left:4.9px;top:332px;font-size:9.16px;color:#15171c;transform:scaleX(1.019);font-weight:bold">13</div>
<div class="t" style="left:4.74px;top:348px;font-size:9.16px;color:#15171c;transform:scaleX(1.019);font-weight:bold">14</div>
<div class="t" style="left:4.86px;top:363px;font-size:9.16px;color:#15171c;transform:scaleX(1.019);font-weight:bold">15</div>
<div class="t" style="left:4.9px;top:379px;font-size:9.16px;color:#15171c;transform:scaleX(1.019);font-weight:bold">16</div>
<div class="t" style="left:4.93px;top:395px;font-size:9.16px;color:#15171c;transform:scaleX(1.019);font-weight:bold">17</div>
<div class="t" style="left:4.86px;top:411px;font-size:9.16px;color:#5aae7d;transform:scaleX(1.019);font-weight:bold">18</div>
<div class="t" style="left:4.9px;top:431px;font-size:9.16px;color:#15171c;transform:scaleX(1.019);font-weight:bold">19</div>
<div class="t" style="left:5.04px;top:448px;font-size:9.16px;color:#15171c;transform:scaleX(1.019);font-weight:bold">20</div>
<div class="t" style="left:5px;top:459px;font-size:9.16px;color:#15171c;transform:scaleX(1.019);font-weight:bold">21</div>
<div class="t" style="left:5.04px;top:469px;font-size:9.16px;color:#15171c;transform:scaleX(1.019);font-weight:bold">22</div>
<div class="t" style="left:5.04px;top:480px;font-size:9.16px;color:#15171c;transform:scaleX(1.019);font-weight:bold">23</div>
<div class="t" style="left:4.88px;top:491px;font-size:9.16px;color:#15171c;transform:scaleX(1.019);font-weight:bold">24</div>
<div class="t" style="left:5px;top:502px;font-size:9.16px;color:#15171c;transform:scaleX(1.019);font-weight:bold">25</div>
<div class="t" style="left:5.04px;top:513px;font-size:9.16px;color:#15171c;transform:scaleX(1.019);font-weight:bold">26</div>
<div class="t" style="left:5.07px;top:524px;font-size:9.16px;color:#15171c;transform:scaleX(1.019);font-weight:bold">27</div>
<div class="t" style="left:5px;top:534px;font-size:9.16px;color:#15171c;transform:scaleX(1.019);font-weight:bold">28</div>
<div class="t" style="left:5.04px;top:545px;font-size:9.16px;color:#15171c;transform:scaleX(1.019);font-weight:bold">29</div>
<div class="t" style="left:5.09px;top:556px;font-size:9.16px;color:#15171c;transform:scaleX(1.019);font-weight:bold">30</div>
<div class="t" style="left:5.04px;top:567px;font-size:9.16px;color:#15171c;transform:scaleX(1.019);font-weight:bold">31</div>
<div class="t" style="left:5.09px;top:578px;font-size:9.16px;color:#15171c;transform:scaleX(1.019);font-weight:bold">32</div>
<div class="ab" style="left:171.25px;top:197.3px;width:359.35px;height:34.8px;background:#94a9d9"></div>
<div class="ab" style="left:171.25px;top:422.4px;width:359.35px;height:23.4px;background:#94a9d9"></div>
<svg class="ov" width="960" height="630" viewBox="0 0 960 630">
<path d="M171.4 232.1V422.4" stroke="#8c8c8c" stroke-width="1.15"/>
<path d="M267.3 232.1V422.4" stroke="#8c8c8c" stroke-width="1.15"/>
<path d="M378.5 232.1V422.4" stroke="#8c8c8c" stroke-width="1.15"/>
<path d="M464.5 232.1V422.4" stroke="#8c8c8c" stroke-width="1.15"/>
<path d="M530.5 232.1V422.4" stroke="#8c8c8c" stroke-width="1.15"/>
<path d="M170.5 248.0H531.4" stroke="#8c8c8c" stroke-width="1.15"/>
<path d="M170.5 264.0H531.4" stroke="#8c8c8c" stroke-width="1.15"/>
<path d="M170.5 279.5H531.4" stroke="#8c8c8c" stroke-width="1.15"/>
<path d="M170.5 295.5H531.4" stroke="#8c8c8c" stroke-width="1.15"/>
<path d="M170.5 311.5H531.4" stroke="#8c8c8c" stroke-width="1.15"/>
<path d="M170.5 327.0H531.4" stroke="#8c8c8c" stroke-width="1.15"/>
<path d="M170.5 343.0H531.4" stroke="#8c8c8c" stroke-width="1.15"/>
<path d="M170.5 359.0H531.4" stroke="#8c8c8c" stroke-width="1.15"/>
<path d="M170.5 375.0H531.4" stroke="#8c8c8c" stroke-width="1.15"/>
<path d="M170.5 390.5H531.4" stroke="#8c8c8c" stroke-width="1.15"/>
<path d="M170.5 406.5H531.4" stroke="#8c8c8c" stroke-width="1.15"/>
<path d="M171.4 196.6V232.6" stroke="#505b78" stroke-width="1.35"/>
<path d="M171.4 421.8V446.2" stroke="#505b78" stroke-width="1.35"/>
<path d="M267.3 196.6V232.6" stroke="#505b78" stroke-width="1.35"/>
<path d="M267.3 421.8V446.2" stroke="#505b78" stroke-width="1.35"/>
<path d="M378.5 196.6V232.6" stroke="#505b78" stroke-width="1.35"/>
<path d="M378.5 421.8V446.2" stroke="#505b78" stroke-width="1.35"/>
<path d="M464.5 196.6V232.6" stroke="#505b78" stroke-width="1.35"/>
<path d="M464.5 421.8V446.2" stroke="#505b78" stroke-width="1.35"/>
<path d="M530.5 196.6V232.6" stroke="#505b78" stroke-width="1.35"/>
<path d="M530.5 421.8V446.2" stroke="#505b78" stroke-width="1.35"/>
<path d="M170.6 197.3H531.3" stroke="#505b78" stroke-width="1.35"/>
<path d="M170.6 221.35H531.3" stroke="#505b78" stroke-width="1.35"/>
<path d="M170.6 231.6H531.3" stroke="#505b78" stroke-width="1.35"/>
<path d="M170.6 422.5H531.3" stroke="#505b78" stroke-width="1.35"/>
<path d="M170.6 445.4H531.3" stroke="#505b78" stroke-width="1.35"/>
<path d="M171.5 232.5h2.2L171.5 234.7Z" fill="#3c9a50"/>
<path d="M267.5 422.5h2.2L267.5 424.7Z" fill="#3c9a50"/>
<path d="M464.5 197.5h2.2L464.5 199.7Z" fill="#3c9a50"/>
<path d="M585.5 248.5h2.2L585.5 250.7Z" fill="#3c9a50"/>
<path d="M585.5 296.5h2.2L585.5 298.7Z" fill="#3c9a50"/>
<path d="M585.5 343.5h2.2L585.5 345.7Z" fill="#3c9a50"/>
<path d="M585.5 390.5h2.2L585.5 392.7Z" fill="#3c9a50"/>
</svg>
<div class="t" style="left:206.65px;top:206px;font-size:9.01px;color:#17191e;transform:scaleX(1.032);font-weight:bold">Bulan</div>
<div class="t" style="left:280.39px;top:206px;font-size:9.01px;color:#17191e;transform:scaleX(1.039);font-weight:bold">Revisi Target  (Ton)</div>
<div class="t" style="left:387.49px;top:206px;font-size:9.01px;color:#17191e;transform:scaleX(1.040);font-weight:bold">Realisasi  (Ton)</div>
<div class="t" style="left:472.9px;top:200px;font-size:8.72px;color:#17191e;transform:scaleX(1.050);font-weight:bold">Persentase</div>
<div class="t" style="left:478.79px;top:211px;font-size:9.16px;color:#17191e;transform:scaleX(1.033);font-weight:bold">realisasi</div>
<div class="t" style="left:216.47px;top:223px;font-size:9.01px;color:#17191e;transform:scaleX(0.951);font-weight:bold;font-style:italic">1</div>
<div class="t" style="left:320.18px;top:223px;font-size:9.01px;color:#17191e;transform:scaleX(0.993);font-weight:bold;font-style:italic">2</div>
<div class="t" style="left:418.75px;top:223px;font-size:9.01px;color:#17191e;transform:scaleX(1.110);font-weight:bold;font-style:italic">3</div>
<div class="t" style="left:486.66px;top:223px;font-size:8.72px;color:#17191e;transform:scaleX(1.108);font-weight:bold;font-style:italic">(3:2)</div>
<div class="t" style="left:172.96px;top:239px;font-size:9.08px;color:#17191e;transform:scaleX(1.011);font-weight:bold">Januari</div>
<div class="t" style="left:333.33px;top:239px;font-size:8.72px;color:#222428;transform:scaleX(1.051)">5,605,721</div>
<div class="t" style="left:419.83px;top:239px;font-size:8.72px;color:#222428;transform:scaleX(1.051)">5,558,447</div>
<div class="t" style="left:484.46px;top:239px;font-size:8.72px;color:#222428;transform:scaleX(1.051)">99.2%</div>
<div class="t" style="left:172.5px;top:255px;font-size:9.08px;color:#17191e;transform:scaleX(1.011);font-weight:bold">Februari</div>
<div class="t" style="left:333.33px;top:255px;font-size:8.72px;color:#222428;transform:scaleX(1.051)">5,244,062</div>
<div class="t" style="left:419.83px;top:255px;font-size:8.72px;color:#222428;transform:scaleX(1.051)">4,902,782</div>
<div class="t" style="left:484.46px;top:255px;font-size:8.72px;color:#222428;transform:scaleX(1.051)">93.5%</div>
<div class="t" style="left:172.5px;top:270px;font-size:9.08px;color:#17191e;transform:scaleX(1.011);font-weight:bold">Maret</div>
<div class="t" style="left:333.33px;top:270px;font-size:8.72px;color:#222428;transform:scaleX(1.051)">5,605,721</div>
<div class="t" style="left:419.83px;top:270px;font-size:8.72px;color:#222428;transform:scaleX(1.051)">5,369,107</div>
<div class="t" style="left:484.46px;top:270px;font-size:8.72px;color:#222428;transform:scaleX(1.051)">95.8%</div>
<div class="t" style="left:172.87px;top:286px;font-size:9.08px;color:#17191e;transform:scaleX(1.011);font-weight:bold">April</div>
<div class="t" style="left:333.33px;top:286px;font-size:8.72px;color:#222428;transform:scaleX(1.051)">5,424,892</div>
<div class="t" style="left:419.83px;top:286px;font-size:8.72px;color:#222428;transform:scaleX(1.051)">5,276,452</div>
<div class="t" style="left:484.46px;top:286px;font-size:8.72px;color:#222428;transform:scaleX(1.051)">97.3%</div>
<div class="t" style="left:172.5px;top:302px;font-size:9.08px;color:#17191e;transform:scaleX(1.011);font-weight:bold">Mei</div>
<div class="t" style="left:333.33px;top:302px;font-size:8.72px;color:#222428;transform:scaleX(1.051)">5,605,721</div>
<div class="t" style="left:419.83px;top:302px;font-size:8.72px;color:#222428;transform:scaleX(1.051)">6,051,592</div>
<div class="t" style="left:481.76px;top:302px;font-size:8.72px;color:#222428;transform:scaleX(1.051)">108.0%</div>
<div class="t" style="left:172.96px;top:318px;font-size:9.08px;color:#17191e;transform:scaleX(1.011);font-weight:bold">Juni</div>
<div class="t" style="left:333.33px;top:318px;font-size:8.72px;color:#222428;transform:scaleX(1.051)">5,424,892</div>
<div class="t" style="left:419.79px;top:318px;font-size:8.72px;color:#222428;transform:scaleX(1.051)">5,897,006</div>
<div class="t" style="left:481.76px;top:318px;font-size:8.72px;color:#222428;transform:scaleX(1.051)">108.7%</div>
<div class="t" style="left:172.96px;top:334px;font-size:9.08px;color:#17191e;transform:scaleX(1.011);font-weight:bold">Juli</div>
<div class="t" style="left:333.33px;top:334px;font-size:8.72px;color:#222428;transform:scaleX(1.051)">5,605,721</div>
<div class="t" style="left:419.74px;top:334px;font-size:8.72px;color:#222428;transform:scaleX(1.051)">6,165,490</div>
<div class="t" style="left:482.1px;top:334px;font-size:8.72px;color:#222428;transform:scaleX(1.051)">110.0%</div>
<div class="t" style="left:172.87px;top:350px;font-size:9.08px;color:#17191e;transform:scaleX(1.011);font-weight:bold">Agustus</div>
<div class="t" style="left:333.33px;top:350px;font-size:8.72px;color:#222428;transform:scaleX(1.051)">5,605,721</div>
<div class="t" style="left:419.79px;top:350px;font-size:8.72px;color:#222428;transform:scaleX(1.051)">6,127,726</div>
<div class="t" style="left:481.76px;top:350px;font-size:8.72px;color:#222428;transform:scaleX(1.051)">109.3%</div>
<div class="t" style="left:172.87px;top:366px;font-size:9.08px;color:#17191e;transform:scaleX(1.011);font-weight:bold">September</div>
<div class="t" style="left:333.33px;top:366px;font-size:8.72px;color:#222428;transform:scaleX(1.051)">5,424,892</div>
<div class="t" style="left:419.83px;top:366px;font-size:8.72px;color:#222428;transform:scaleX(1.051)">5,875,879</div>
<div class="t" style="left:481.76px;top:366px;font-size:8.72px;color:#222428;transform:scaleX(1.051)">108.3%</div>
<div class="t" style="left:172.73px;top:381px;font-size:9.08px;color:#17191e;transform:scaleX(1.011);font-weight:bold">Oktober</div>
<div class="t" style="left:333.33px;top:381px;font-size:8.72px;color:#222428;transform:scaleX(1.051)">5,605,721</div>
<div class="t" style="left:419.79px;top:381px;font-size:8.72px;color:#222428;transform:scaleX(1.051)">6,245,048</div>
<div class="t" style="left:482.45px;top:381px;font-size:8.72px;color:#222428;transform:scaleX(1.051)">111.4%</div>
<div class="t" style="left:172.5px;top:397px;font-size:9.08px;color:#17191e;transform:scaleX(1.011);font-weight:bold">November</div>
<div class="t" style="left:333.33px;top:397px;font-size:8.72px;color:#222428;transform:scaleX(1.051)">5,424,892</div>
<div class="t" style="left:419.79px;top:397px;font-size:8.72px;color:#222428;transform:scaleX(1.051)">5,907,555</div>
<div class="t" style="left:481.76px;top:397px;font-size:8.72px;color:#222428;transform:scaleX(1.051)">108.9%</div>
<div class="t" style="left:172.5px;top:413px;font-size:9.08px;color:#17191e;transform:scaleX(1.011);font-weight:bold">Desember</div>
<div class="t" style="left:333.33px;top:413px;font-size:8.72px;color:#222428;transform:scaleX(1.051)">5,605,721</div>
<div class="t" style="left:419.83px;top:413px;font-size:8.72px;color:#222428;transform:scaleX(1.051)">6,023,932</div>
<div class="t" style="left:481.76px;top:413px;font-size:8.72px;color:#222428;transform:scaleX(1.051)">107.5%</div>
<div class="t" style="left:208.9px;top:431px;font-size:9.08px;color:#17191e;transform:scaleX(1.047);font-weight:bold">Total</div>
<div class="t" style="left:330.27px;top:431px;font-size:9.08px;color:#17191e;transform:scaleX(1.024);font-weight:bold">66,183,679</div>
<div class="t" style="left:414.22px;top:431px;font-size:9.08px;color:#17191e;transform:scaleX(1.024);font-weight:bold">69,401,017</div>
<div class="t" style="left:479.47px;top:431px;font-size:9.08px;color:#17191e;transform:scaleX(1.024);font-weight:bold">104.86%</div>
<div class="t" style="left:617.16px;top:239px;font-size:9.01px;color:#17191e;transform:scaleX(1.016);font-weight:bold">Target</div>
<div class="t" style="left:697.14px;top:239px;font-size:9.01px;color:#17191e;transform:scaleX(1.033);font-weight:bold">Realisasi</div>
<div class="t" style="left:625.75px;top:255px;font-size:8.72px;color:#222428;transform:scaleX(1.051)">16,455,505</div>
<div class="t" style="left:708.55px;top:255px;font-size:8.72px;color:#222428;transform:scaleX(1.051)">15,830,337</div>
<div class="t" style="left:776.83px;top:255px;font-size:8.72px;color:#222428;transform:scaleX(1.051)">TW I</div>
<div class="t" style="left:625.75px;top:302px;font-size:8.72px;color:#222428;transform:scaleX(1.051)">16,455,505</div>
<div class="t" style="left:708.46px;top:302px;font-size:8.72px;color:#222428;transform:scaleX(1.051)">17,225,050</div>
<div class="t" style="left:775.57px;top:302px;font-size:8.72px;color:#222428;transform:scaleX(1.051)">TW II</div>
<div class="t" style="left:625.75px;top:350px;font-size:8.72px;color:#222428;transform:scaleX(1.051)">16,636,335</div>
<div class="t" style="left:708.5px;top:350px;font-size:8.72px;color:#222428;transform:scaleX(1.051)">18,169,095</div>
<div class="t" style="left:774.29px;top:350px;font-size:8.72px;color:#222428;transform:scaleX(1.051)">TW III</div>
<div class="t" style="left:625.75px;top:397px;font-size:8.72px;color:#222428;transform:scaleX(1.051)">16,636,335</div>
<div class="t" style="left:708.5px;top:397px;font-size:8.72px;color:#222428;transform:scaleX(1.051)">18,176,535</div>
<div class="t" style="left:773.39px;top:397px;font-size:8.72px;color:#222428;transform:scaleX(1.051)">TW IV</div>
<div class="ab" style="left:922.8px;top:406.24px;width:23.2px;height:16.46px;background:transparent;border:1.6px solid #5aab7c;border-right:none"></div>
<div class="ab" style="left:115.7px;top:467.3px;width:648.1px;height:132.7px;background:#ffffff;border:1px solid #dcdcdc;border-bottom:none"></div>
<svg class="ov" width="960" height="630" viewBox="0 0 960 630">
<path d="M196.3 574.18H754.5" stroke="#d9d9d9" stroke-width="1"/>
<path d="M196.3 560.36H754.5" stroke="#d9d9d9" stroke-width="1"/>
<path d="M196.3 546.54H754.5" stroke="#d9d9d9" stroke-width="1"/>
<path d="M196.3 532.72H754.5" stroke="#d9d9d9" stroke-width="1"/>
<path d="M196.3 518.90H754.5" stroke="#d9d9d9" stroke-width="1"/>
<path d="M196.3 505.08H754.5" stroke="#d9d9d9" stroke-width="1"/>
<rect x="210.21" y="511.18" width="18.7" height="81.82" fill="#7eab58"/>
<rect x="256.73" y="520.24" width="18.7" height="72.76" fill="#7eab58"/>
<rect x="303.24" y="513.80" width="18.7" height="79.20" fill="#7eab58"/>
<rect x="349.76" y="515.08" width="18.7" height="77.92" fill="#7eab58"/>
<rect x="396.27" y="504.37" width="18.7" height="88.63" fill="#7eab58"/>
<rect x="442.79" y="506.50" width="18.7" height="86.50" fill="#7eab58"/>
<rect x="489.31" y="502.79" width="18.7" height="90.21" fill="#7eab58"/>
<rect x="535.83" y="503.31" width="18.7" height="89.69" fill="#7eab58"/>
<rect x="582.34" y="506.80" width="18.7" height="86.20" fill="#7eab58"/>
<rect x="628.86" y="501.69" width="18.7" height="91.31" fill="#7eab58"/>
<rect x="675.38" y="506.36" width="18.7" height="86.64" fill="#7eab58"/>
<rect x="721.89" y="504.75" width="18.7" height="88.25" fill="#7eab58"/>
<path d="M219.56 510.53L266.08 515.53L312.59 510.53L359.11 513.03L405.62 510.53L452.14 513.03L498.66 510.53L545.18 510.53L591.69 513.03L638.21 510.53L684.73 513.03L731.24 510.53" fill="none" stroke="#4a6ab5" stroke-width="2"/>
<circle cx="219.56" cy="510.53" r="2.6" fill="#4a6ab5"/>
<circle cx="266.08" cy="515.53" r="2.6" fill="#4a6ab5"/>
<circle cx="312.59" cy="510.53" r="2.6" fill="#4a6ab5"/>
<circle cx="359.11" cy="513.03" r="2.6" fill="#4a6ab5"/>
<circle cx="405.62" cy="510.53" r="2.6" fill="#4a6ab5"/>
<circle cx="452.14" cy="513.03" r="2.6" fill="#4a6ab5"/>
<circle cx="498.66" cy="510.53" r="2.6" fill="#4a6ab5"/>
<circle cx="545.18" cy="510.53" r="2.6" fill="#4a6ab5"/>
<circle cx="591.69" cy="513.03" r="2.6" fill="#4a6ab5"/>
<circle cx="638.21" cy="510.53" r="2.6" fill="#4a6ab5"/>
<circle cx="684.73" cy="513.03" r="2.6" fill="#4a6ab5"/>
<circle cx="731.24" cy="510.53" r="2.6" fill="#4a6ab5"/>
</svg>
<div class="t" style="left:321.59px;top:475px;font-size:10.76px;color:#141414;transform:scaleX(1.058);font-weight:bold">Target dan Realisasi Angkutan Barang 2024</div>
<div class="t" style="left:156.73px;top:571px;font-size:6.98px;color:#3a3a3a;transform:scaleX(1.116);font-weight:bold">1,000,000</div>
<div class="t" style="left:156.73px;top:557px;font-size:6.98px;color:#3a3a3a;transform:scaleX(1.116);font-weight:bold">2,000,000</div>
<div class="t" style="left:156.73px;top:543px;font-size:6.98px;color:#3a3a3a;transform:scaleX(1.116);font-weight:bold">3,000,000</div>
<div class="t" style="left:156.73px;top:529px;font-size:6.98px;color:#3a3a3a;transform:scaleX(1.116);font-weight:bold">4,000,000</div>
<div class="t" style="left:156.73px;top:515px;font-size:6.98px;color:#3a3a3a;transform:scaleX(1.116);font-weight:bold">5,000,000</div>
<div class="t" style="left:156.73px;top:501px;font-size:6.98px;color:#3a3a3a;transform:scaleX(1.116);font-weight:bold">6,000,000</div>
<div class="ab" style="left:0;top:0;width:960px;height:630px;transform:rotate(-90deg);transform-origin:130.3px 542.9px">
<div class="t" style="left:105.76px;top:539px;font-size:9.6px;color:#141414;transform:scaleX(0.853);font-weight:bold">Volume (ton)</div>
</div>
<div class="ab" style="left:945.4px;top:154px;width:14.6px;height:11.3px;background:#f6f7f9"></div>
<div class="ab" style="left:948px;top:165.3px;width:12px;height:422px;background:#ebecef"></div>
<div class="ab" style="left:948.4px;top:192.5px;width:10.8px;height:327.5px;background:#d6d7db;border-radius:5.4px"></div>
<svg class="ov" width="960" height="630" viewBox="0 0 960 630">
<path d="M949.8 159.2H957.8M949.8 161.6H957.8" stroke="#b9bbc0" stroke-width="1"/>
<path d="M951.3 175.8L954.3 172.8L957.3 175.8Z" fill="#8d9098"/>
<path d="M951.3 577.6L954.3 580.6L957.3 577.6Z" fill="#8d9098"/>
</svg>
<div class="ab" style="left:0px;top:587.3px;width:960px;height:14.7px;background:#f5f6f8"></div>
<div class="ab" style="left:101.7px;top:587.3px;width:480px;height:14.7px;background:#e6e7eb"></div>
<div class="ab" style="left:581.7px;top:587.3px;width:150.8px;height:14.7px;background:#ffffff"></div>
<div class="ab" style="left:807.5px;top:590.8px;width:125.6px;height:10px;background:#e8e9ed"></div>
<div class="ab" style="left:825px;top:591.2px;width:72.5px;height:9.5px;background:#d5d6da;border-radius:5px"></div>
<div class="t" style="left:119.47px;top:593px;font-size:10.17px;color:#4a4f5c;transform:scaleX(1.017)">PERKEBUNAN</div>
<div class="t" style="left:223.85px;top:593px;font-size:10.17px;color:#4a4f5c;transform:scaleX(1.041)">PETI KEMAS</div>
<div class="t" style="left:322.14px;top:593px;font-size:10.17px;color:#4a4f5c;transform:scaleX(1.055)">KARET &amp; KLINKER</div>
<div class="t" style="left:450.85px;top:593px;font-size:10.17px;color:#4a4f5c;transform:scaleX(1.047)">RETAIL</div>
<div class="t" style="left:519.94px;top:593px;font-size:10.17px;color:#4a4f5c;transform:scaleX(1.060)">LAINNYA</div>
<div class="t" style="left:595.04px;top:593px;font-size:10.17px;color:#58ad7c;transform:scaleX(1.151);font-weight:bold">REALISASI &amp; TARGET</div>
<svg class="ov" width="960" height="630" viewBox="0 0 960 630">
<path d="M14 592.3V601M21.6 592.3L16.8 596.7L21.6 601" fill="none" stroke="#4f5461" stroke-width="1.1"/>
<path d="M42.4 592.3L37.6 596.7L42.4 601" fill="none" stroke="#4f5461" stroke-width="1.1"/>
<path d="M59.4 592.3L64.2 596.7L59.4 601" fill="none" stroke="#a9acb3" stroke-width="1.1"/>
<path d="M80 592.3L84.8 596.7L80 601M87.6 592.3V601" fill="none" stroke="#a9acb3" stroke-width="1.1"/>
<circle cx="740.3" cy="596.8" r="0.9" fill="#444"/><circle cx="744.6" cy="596.8" r="0.9" fill="#444"/><circle cx="748.9" cy="596.8" r="0.9" fill="#444"/>
<path d="M765.6 591.8V602M760.2 596.8H771.2" stroke="#4f5461" stroke-width="1.2"/>
<path d="M800 592V600.8M802 592V600.8" stroke="#c4c6cb" stroke-width="0.9"/>
<path d="M938.4 592V600.8M940.4 592V600.8" stroke="#c4c6cb" stroke-width="0.9"/>
<path d="M816.6 593.9L813.8 596.4L816.6 598.9Z" fill="#8d9098"/>
<path d="M924.4 593.9L927.2 596.4L924.4 598.9Z" fill="#8d9098"/>
</svg>
<div class="ab" style="left:0px;top:602px;width:960px;height:28px;background:#000000"></div>
<svg class="ov" width="960" height="630" viewBox="0 0 960 630">
<path d="M711 610.8V622.2L701 616.5Z" fill="none" stroke="#e8e8e8" stroke-width="1.3" stroke-linejoin="round"/>
<circle cx="777" cy="616.5" r="6.2" fill="none" stroke="#e8e8e8" stroke-width="1.3"/>
<rect x="843.2" y="611.2" width="10.6" height="10.6" rx="1" fill="none" stroke="#e8e8e8" stroke-width="1.3"/>
<rect x="902.7" y="612.3" width="13.6" height="9.6" rx="1.2" fill="none" stroke="#e8e8e8" stroke-width="1.2"/>
<rect x="904.8" y="614.2" width="1.1" height="1.1" fill="#e8e8e8"/>
<rect x="906.9" y="614.2" width="1.1" height="1.1" fill="#e8e8e8"/>
<rect x="909.0" y="614.2" width="1.1" height="1.1" fill="#e8e8e8"/>
<rect x="911.1" y="614.2" width="1.1" height="1.1" fill="#e8e8e8"/>
<rect x="913.2" y="614.2" width="1.1" height="1.1" fill="#e8e8e8"/>
<rect x="904.8" y="616.2" width="1.1" height="1.1" fill="#e8e8e8"/>
<rect x="906.9" y="616.2" width="1.1" height="1.1" fill="#e8e8e8"/>
<rect x="909.0" y="616.2" width="1.1" height="1.1" fill="#e8e8e8"/>
<rect x="911.1" y="616.2" width="1.1" height="1.1" fill="#e8e8e8"/>
<rect x="913.2" y="616.2" width="1.1" height="1.1" fill="#e8e8e8"/>
<rect x="906" y="618.6" width="7" height="1.1" fill="#e8e8e8"/>
</svg>
</body></html>
